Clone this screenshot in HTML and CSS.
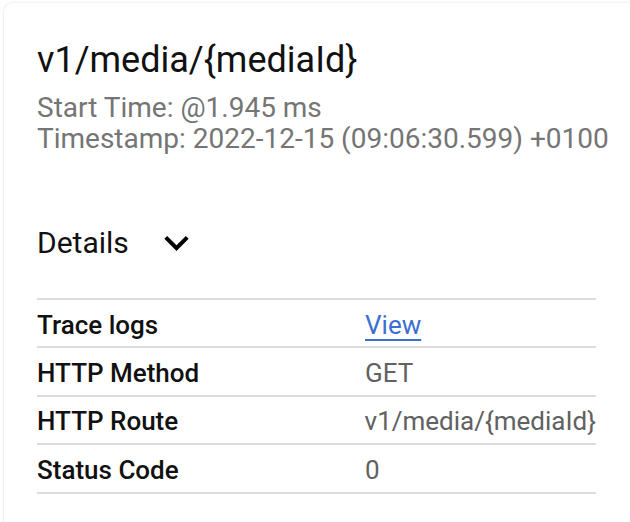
FILE: index.html
```html
<!DOCTYPE html>
<html>
<head>
<meta charset="utf-8">
<link rel="stylesheet" href="styles.css">
</head>
<body>
<div class="card">
  <h1 class="title">v1/media/{mediaId}</h1>
  <div class="meta">
    <div>Start Time: @1.945 ms</div>
    <div>Timestamp: 2022-12-15 (09:06:30.599) +0100</div>
  </div>
  <div class="details-head">
    <span class="details-label">Details</span>
    <svg class="chevron" viewBox="6 8.59 12 7.41" width="25" height="15"><path d="M16.59 8.59L12 13.17 7.41 8.59 6 10l6 6 6-6z" fill="#000"/></svg>
  </div>
  <div class="kv">
    <div class="row"><div class="key">Trace logs</div><div class="val"><a class="link" href="#">View</a></div></div>
    <div class="row"><div class="key">HTTP Method</div><div class="val">GET</div></div>
    <div class="row"><div class="key">HTTP Route</div><div class="val">v1/media/{mediaId}</div></div>
    <div class="row"><div class="key">Status Code</div><div class="val">0</div></div>
  </div>
</div>
</body>
</html>
```
FILE: styles.css
```css
html, body {
  margin: 0;
  padding: 0;
  background: #ffffff;
}
body {
  font-family: Roboto, "Liberation Sans", sans-serif;
  overflow: hidden;
  height: 522px;
}
.card {
  margin: 3px 0 0 4px;
  width: 660px;
  min-height: 600px;
  background: #fff;
  border-radius: 9px;
  box-shadow: 0 0 3px rgba(0,0,0,0.13), 0 1px 2px rgba(0,0,0,0.06);
  padding: 37px 0 0 33px;
  box-sizing: border-box;
}
.title {
  margin: 0;
  font-size: 36px;
  font-weight: 400;
  line-height: 40px;
  color: #111;
}
.meta {
  margin-top: 12px;
  color: #757575;
  font-size: 28px;
  line-height: 31px;
}
.details-head {
  margin-top: 69px;
  display: flex;
  align-items: center;
  gap: 35px;
  height: 40px;
}
.details-label {
  font-size: 30px;
  line-height: 40px;
  color: #111;
}
.chevron {
  display: block;
  margin-top: 1px;
}
.kv {
  margin-top: 35px;
  width: 559px;
  border-top: 2px solid #dcdcdc;
}
.row {
  display: flex;
  align-items: center;
  height: 43.4px;
  padding-top: 3px;
  border-bottom: 2px solid #dcdcdc;
  font-size: 26px;
  box-sizing: content-box;
}
.key {
  width: 328px;
  font-weight: 500;
  color: #111;
}
.val {
  color: #616161;
}
.link {
  color: #3b6fd1;
  text-decoration: underline;
  text-decoration-thickness: 2px;
  text-underline-offset: 5px;
}
```
